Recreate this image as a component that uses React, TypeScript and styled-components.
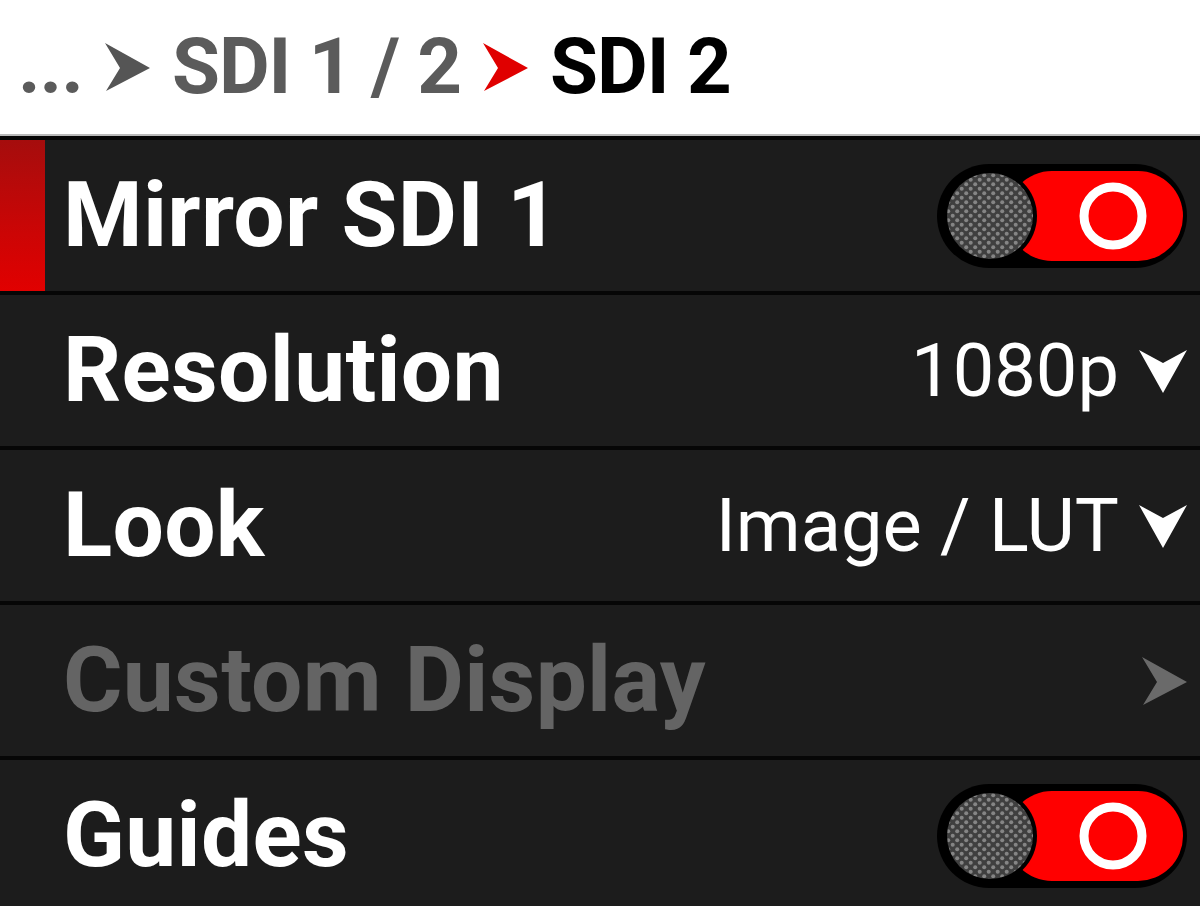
import React from 'react';
import styled, { createGlobalStyle } from 'styled-components';

const GlobalStyle = createGlobalStyle`
  html, body {
    margin: 0;
    padding: 0;
    background: #1c1c1c;
    overflow: hidden;
  }
  body {
    font-family: Roboto, "Noto Sans", "Liberation Sans", sans-serif;
  }
`;

const Screen = styled.div`
  width: 1200px;
  height: 906px;
  overflow: hidden;
  background: #1c1c1c;
`;

const Header = styled.div`
  height: 134px;
  background: #fff;
  border-bottom: 2px solid #b9b9b9;
  display: flex;
  align-items: center;
  padding-left: 18px;
  gap: 22px;
  font-weight: 700;
  font-size: 78px;
  letter-spacing: -1px;
  box-sizing: content-box;
`;

const Crumb = styled.span<{ $current?: boolean }>`
  color: ${(p) => (p.$current ? '#000' : '#5b5b5b')};
  line-height: 1;
  white-space: nowrap;
`;

const Row = styled.div`
  height: 151px;
  border-top: 4px solid #060606;
  display: flex;
  align-items: center;
  justify-content: space-between;
  padding: 0 13px 0 63px;
  position: relative;
  background: #1c1c1c;
`;

const ActiveMark = styled.div`
  position: absolute;
  left: 0;
  top: 0;
  bottom: 0;
  width: 45px;
  background: linear-gradient(180deg, #a50d0d 0%, #c80606 55%, #e10000 100%);
`;

const Label = styled.span<{ $dim?: boolean }>`
  color: ${(p) => (p.$dim ? '#646464' : '#fff')};
  font-weight: 700;
  font-size: 91px;
  letter-spacing: 0.3px;
  line-height: 1;
  white-space: nowrap;
`;

const Value = styled.div`
  display: flex;
  align-items: center;
  gap: 20px;
  color: #fff;
  font-size: 74px;
  font-weight: 400;
  line-height: 1;
  white-space: nowrap;
`;

const Arrow = ({ color, down }: { color: string; down?: boolean }) =>
  down ? (
    <svg width="48" height="44" viewBox="0 0 48 44">
      <path d="M0 1 L24 14 L48 1 L24 44 Z" fill={color} />
    </svg>
  ) : (
    <svg width="45" height="48" viewBox="0 0 45 48">
      <path d="M0 0 L45 25 L1 48 L15 25 Z" fill={color} />
    </svg>
  );

const Toggle = ({ id }: { id: string }) => (
  <svg width="250" height="104" viewBox="0 0 250 104">
    <defs>
      <pattern id={id} width="9" height="9" patternUnits="userSpaceOnUse">
        <rect width="9" height="9" fill="#3f3f3f" />
        <circle cx="2.2" cy="2.2" r="2" fill="#858585" />
        <circle cx="6.7" cy="6.7" r="2" fill="#858585" />
      </pattern>
    </defs>
    <rect x="0" y="0" width="250" height="104" rx="52" fill="#000" />
    <rect x="70" y="7" width="176" height="90" rx="45" fill="#ff0000" />
    <circle cx="53" cy="52" r="47" fill="#000" />
    <circle cx="53" cy="52" r="43" fill={`url(#${id})`} />
    <circle cx="176" cy="52" r="29" fill="none" stroke="#fff" strokeWidth="9" />
  </svg>
);

export default function App() {
  return (
    <Screen>
      <GlobalStyle />
      <Header>
        <Crumb>...</Crumb>
        <Arrow color="#555" />
        <Crumb>SDI 1 / 2</Crumb>
        <Arrow color="#e00000" />
        <Crumb $current>SDI 2</Crumb>
      </Header>

      <Row>
        <ActiveMark />
        <Label>Mirror SDI 1</Label>
        <Toggle id="dots-a" />
      </Row>

      <Row>
        <Label>Resolution</Label>
        <Value>
          1080p
          <Arrow color="#fff" down />
        </Value>
      </Row>

      <Row>
        <Label>Look</Label>
        <Value>
          Image / LUT
          <Arrow color="#fff" down />
        </Value>
      </Row>

      <Row>
        <Label $dim>Custom Display</Label>
        <Arrow color="#6a6a6a" />
      </Row>

      <Row>
        <Label>Guides</Label>
        <Toggle id="dots-b" />
      </Row>
    </Screen>
  );
}
